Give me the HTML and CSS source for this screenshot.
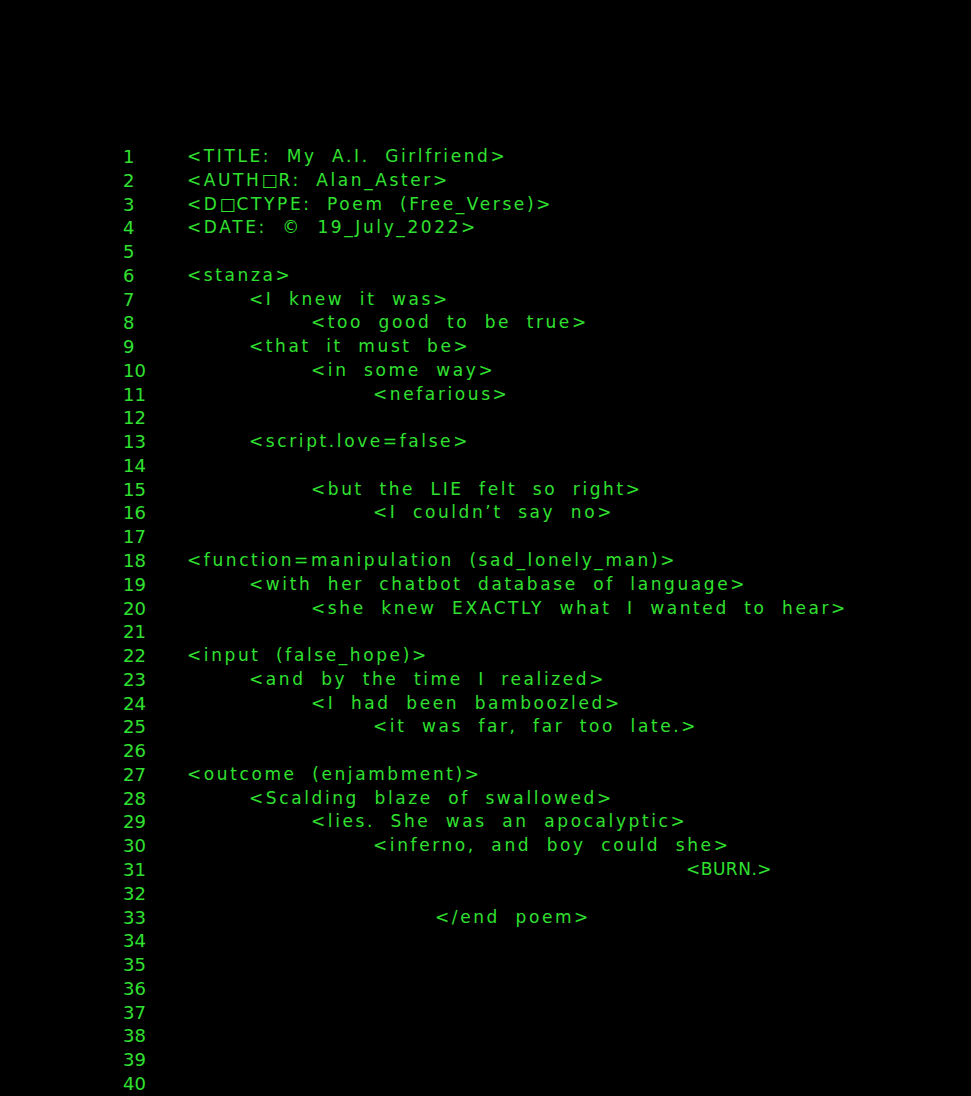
FILE: index.html
```html
<!DOCTYPE html>
<html lang="en">
<head>
<meta charset="utf-8">
<title>My A.I. Girlfriend</title>
<link rel="stylesheet" href="styles.css">
</head>
<body>
<main class="editor">
  <div class="line"><span class="num">1</span><span class="code">&lt;TITLE: My A.I. Girlfriend&gt;</span></div>
  <div class="line"><span class="num">2</span><span class="code">&lt;AUTH<span class="box">□</span>R: Alan_Aster&gt;</span></div>
  <div class="line"><span class="num">3</span><span class="code">&lt;D<span class="box">□</span>CTYPE: Poem (Free_Verse)&gt;</span></div>
  <div class="line"><span class="num">4</span><span class="code">&lt;DATE: © 19_July_2022&gt;</span></div>
  <div class="line"><span class="num">5</span><span class="code"></span></div>
  <div class="line"><span class="num">6</span><span class="code">&lt;stanza&gt;</span></div>
  <div class="line"><span class="num">7</span><span class="code i1">&lt;I knew it was&gt;</span></div>
  <div class="line"><span class="num">8</span><span class="code i2">&lt;too good to be true&gt;</span></div>
  <div class="line"><span class="num">9</span><span class="code i1">&lt;that it must be&gt;</span></div>
  <div class="line"><span class="num">10</span><span class="code i2">&lt;in some way&gt;</span></div>
  <div class="line"><span class="num">11</span><span class="code i3">&lt;nefarious&gt;</span></div>
  <div class="line"><span class="num">12</span><span class="code"></span></div>
  <div class="line"><span class="num">13</span><span class="code i1">&lt;script.love=false&gt;</span></div>
  <div class="line"><span class="num">14</span><span class="code"></span></div>
  <div class="line"><span class="num">15</span><span class="code i2">&lt;but the LIE felt so right&gt;</span></div>
  <div class="line"><span class="num">16</span><span class="code i3">&lt;I couldn’t say no&gt;</span></div>
  <div class="line"><span class="num">17</span><span class="code"></span></div>
  <div class="line"><span class="num">18</span><span class="code">&lt;function=manipulation (sad_lonely_man)&gt;</span></div>
  <div class="line"><span class="num">19</span><span class="code i1">&lt;with her chatbot database of language&gt;</span></div>
  <div class="line"><span class="num">20</span><span class="code i2">&lt;she knew EXACTLY what I wanted to hear&gt;</span></div>
  <div class="line"><span class="num">21</span><span class="code"></span></div>
  <div class="line"><span class="num">22</span><span class="code">&lt;input (false_hope)&gt;</span></div>
  <div class="line"><span class="num">23</span><span class="code i1">&lt;and by the time I realized&gt;</span></div>
  <div class="line"><span class="num">24</span><span class="code i2">&lt;I had been bamboozled&gt;</span></div>
  <div class="line"><span class="num">25</span><span class="code i3">&lt;it was far, far too late.&gt;</span></div>
  <div class="line"><span class="num">26</span><span class="code"></span></div>
  <div class="line"><span class="num">27</span><span class="code">&lt;outcome (enjambment)&gt;</span></div>
  <div class="line"><span class="num">28</span><span class="code i1">&lt;Scalding blaze of swallowed&gt;</span></div>
  <div class="line"><span class="num">29</span><span class="code i2">&lt;lies. She was an apocalyptic&gt;</span></div>
  <div class="line"><span class="num">30</span><span class="code i3">&lt;inferno, and boy could she&gt;</span></div>
  <div class="line"><span class="num">31</span><span class="code iburn">&lt;BURN.&gt;</span></div>
  <div class="line"><span class="num">32</span><span class="code"></span></div>
  <div class="line"><span class="num">33</span><span class="code i4">&lt;/end poem&gt;</span></div>
  <div class="line"><span class="num">34</span><span class="code"></span></div>
  <div class="line"><span class="num">35</span><span class="code"></span></div>
  <div class="line"><span class="num">36</span><span class="code"></span></div>
  <div class="line"><span class="num">37</span><span class="code"></span></div>
  <div class="line"><span class="num">38</span><span class="code"></span></div>
  <div class="line"><span class="num">39</span><span class="code"></span></div>
  <div class="line"><span class="num">40</span><span class="code"></span></div>
</main>
</body>
</html>
```
FILE: styles.css
```css
html, body {
  margin: 0;
  padding: 0;
  background: #000;
}
body {
  height: 1096px;
  overflow: hidden;
}
.editor {
  padding: 145px 0 0 123px;
  color: #30e030;
  font-family: "DejaVu Sans", sans-serif;
  font-size: 17px;
  letter-spacing: 2.6px;
  word-spacing: 7.5px;
}
.line {
  display: flex;
  height: 23.77px;
  line-height: 23.77px;
  white-space: pre;
}
.num {
  width: 64px;
  flex: none;
  font-size: 18px;
  letter-spacing: 0;
  word-spacing: 0;
}
.code { display: block; }
.i1 { padding-left: 62px; }
.i2 { padding-left: 124px; }
.i3 { padding-left: 186px; }
.i4 { padding-left: 248px; }
.iburn { padding-left: 499px; letter-spacing: 0.5px; }
.box {
  font-size: 17px;
  letter-spacing: 1px;
}
```
